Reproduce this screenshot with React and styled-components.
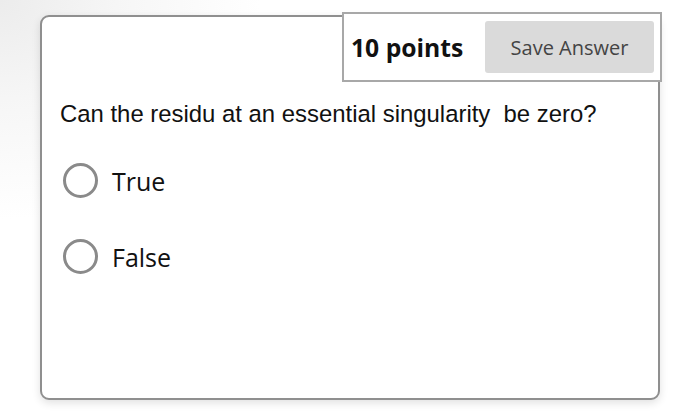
import React from "react";
import styled, { createGlobalStyle } from "styled-components";

const GlobalStyle = createGlobalStyle`
  html, body {
    margin: 0;
    padding: 0;
  }
  body {
    width: 700px;
    height: 420px;
    overflow: hidden;
    background: radial-gradient(ellipse 260px 220px at 0px 0px, #ececec 0%, #f6f6f6 45%, #ffffff 100%);
    font-family: "Open Sans", "Liberation Sans", sans-serif;
  }
`;

const Page = styled.div`
  padding: 15px 0 0 40px;
`;

const Card = styled.div`
  box-sizing: border-box;
  width: 620px;
  height: 385px;
  background: #ffffff;
  border: 2px solid #8f8f8f;
  border-radius: 9px;
  box-shadow: 0 3px 8px rgba(0, 0, 0, 0.12);
  padding: 0 0 0 18px;
`;

const Header = styled.div`
  display: flex;
  justify-content: flex-end;
  margin: -5px -4px 0 0;
`;

const PointsBox = styled.div`
  box-sizing: border-box;
  width: 320px;
  height: 70px;
  display: flex;
  align-items: center;
  justify-content: space-between;
  padding: 0 6px 0 7px;
  background: #ffffff;
  border: 2px solid #a8a8a8;
`;

const Points = styled.span`
  font-weight: 700;
  font-size: 24.7px;
  color: #111;
`;

const SaveButton = styled.button`
  width: 169px;
  height: 52px;
  border: none;
  border-radius: 3px;
  background: #dadada;
  color: #444;
  font-family: "Open Sans", sans-serif;
  font-size: 20px;
  cursor: pointer;
`;

const Question = styled.p`
  margin: 18px 0 0 0;
  font-family: "Liberation Sans", Arial, sans-serif;
  font-size: 23.9px;
  line-height: 28px;
  color: #111;
  white-space: pre;
`;

const Options = styled.div`
  display: flex;
  flex-direction: column;
  gap: 41px;
  margin-top: 35px;
`;

const Option = styled.label`
  display: flex;
  align-items: center;
  gap: 14px;
  margin-left: 3px;
  font-size: 25px;
  color: #111;
  cursor: pointer;
`;

const Radio = styled.span`
  box-sizing: border-box;
  width: 35px;
  height: 35px;
  border-radius: 50%;
  border: 3px solid #8a8a8a;
  background: #fff;
`;

export default function App() {
  return (
    <>
      <GlobalStyle />
      <Page>
        <Card>
          <Header>
            <PointsBox>
              <Points>10 points</Points>
              <SaveButton>Save Answer</SaveButton>
            </PointsBox>
          </Header>
          <Question>{"Can the residu at an essential singularity  be zero?"}</Question>
          <Options>
            <Option>
              <Radio />
              True
            </Option>
            <Option>
              <Radio />
              False
            </Option>
          </Options>
        </Card>
      </Page>
    </>
  );
}
